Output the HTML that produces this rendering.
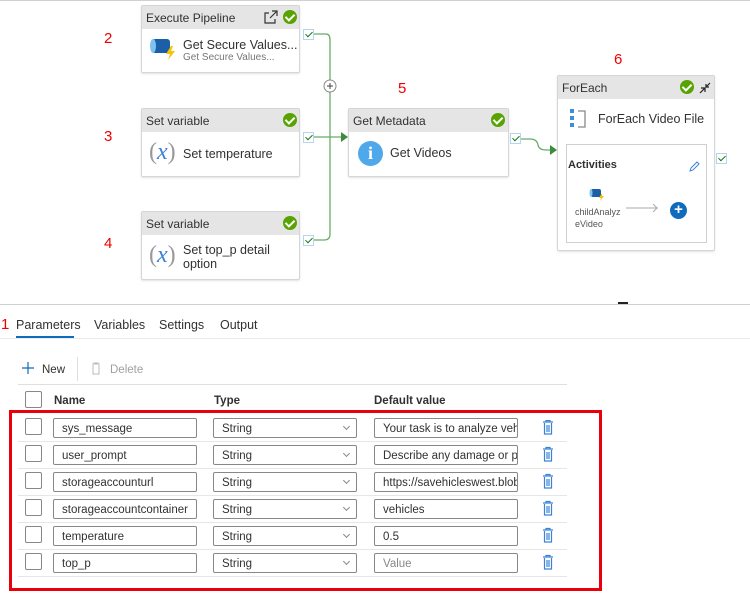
<!DOCTYPE html>
<html><head><meta charset="utf-8"><style>
*{box-sizing:border-box;margin:0;padding:0}
body{width:750px;height:614px;background:#fff;position:relative;overflow:hidden;font-family:"Liberation Sans",sans-serif;font-size:12px;color:#323130}
.a{position:absolute}
.card{position:absolute;background:#fff;border:1px solid #d6d6d6;border-radius:2px;box-shadow:0 1px 2px rgba(0,0,0,.12)}
.hd{height:23px;background:#e5e5e5;padding:5px 4px;font-size:12px;color:#323130}
.ok{position:absolute;width:14px;height:14px;border-radius:50%;background:#57a300}
.ok:after{content:"";position:absolute;left:4px;top:2px;width:4px;height:7px;border:solid #fff;border-width:0 2px 2px 0;transform:rotate(45deg)}
.cb{position:absolute;width:11px;height:11px;border:1px solid #b8d3ee;background:#fff}
.cb:after{content:"";position:absolute;left:3px;top:0px;width:3px;height:6px;border:solid #107c10;border-width:0 1.5px 1.5px 0;transform:rotate(45deg)}
.num{position:absolute;color:#e00;font-size:15px}
.x{position:absolute;font-family:"Liberation Serif",serif;font-size:24px;color:#999}
.x i{color:#3b82d6}
.t{position:absolute;font-size:12.5px}
.inp{position:absolute;height:20px;border:1px solid #8a8886;border-radius:2px;padding:4px 8px 0;font-size:11.5px;white-space:nowrap;overflow:hidden}
.chk{position:absolute;width:17px;height:17px;border:1px solid #8a8886;border-radius:2px;left:25px}
.rl{position:absolute;left:18px;width:549px;height:1px;background:#e8e6e4}
.car{position:absolute;right:7px;top:5px;width:5px;height:5px;border:solid #888;border-width:0 1px 1px 0;transform:rotate(45deg)}
</style></head><body>
<div class="a" style="left:0;top:0;width:750px;height:1px;background:#d0d0d0"></div>

<svg class="a" style="left:0;top:0" width="750" height="300">
<path d="M312 34 H326 Q330 34 330 40 V234 Q330 240 324 240 H312" fill="none" stroke="#6aaa6a" stroke-width="1.3"/>
<path d="M312 137 H343" stroke="#6aaa6a" stroke-width="1.3"/>
<polygon points="341,132 348,137 341,142" fill="#3c8c3c"/>
<circle cx="330" cy="86" r="6" fill="#fff" stroke="#888"/>
<path d="M327 86h6M330 83v6" stroke="#444"/>
<path d="M519 139 H530 Q537 139 538 145 Q539 150 546 150 H551" fill="none" stroke="#6aaa6a" stroke-width="1.3"/>
<polygon points="550,145 557,150 550,155" fill="#3c8c3c"/>
</svg>

<div class="num" style="left:104px;top:30px">2</div>
<div class="num" style="left:104px;top:128px">3</div>
<div class="num" style="left:104px;top:235px">4</div>
<div class="num" style="left:398px;top:80px">5</div>
<div class="num" style="left:614px;top:51px">6</div>
<div class="num" style="left:1px;top:316px">1</div>

<div class="card" style="left:141px;top:5px;width:159px;height:68px">
<div class="hd">Execute Pipeline</div>
<svg class="a" style="left:122px;top:4px" width="14" height="14"><path d="M8 1h5v5M13 1L6 8M11 9v4H1V3h4" fill="none" stroke="#333" stroke-width="1.2"/></svg>
<div class="ok" style="left:141px;top:4px"></div>
<svg class="a" style="left:7px;top:30px" width="28" height="26"><rect x="3" y="3" width="18" height="14" rx="3" fill="#1b5fa8"/><ellipse cx="4" cy="10" rx="3" ry="7" fill="#7ec3f0"/><path d="M22 10l-5 8h4l-2 6 7-9h-4l2-5z" fill="#f5c400"/></svg>
<div class="t" style="left:41px;top:32px">Get Secure Values...</div>
<div class="t" style="left:41px;top:46px;font-size:10px;color:#777">Get Secure Values...</div>
</div>
<div class="cb" style="left:303px;top:29px"></div>

<div class="card" style="left:141px;top:108px;width:159px;height:69px">
<div class="hd">Set variable</div>
<div class="ok" style="left:141px;top:4px"></div>
<div class="x" style="left:7px;top:30px">(<i>x</i>)</div>
<div class="t" style="left:41px;top:38px">Set temperature</div>
</div>
<div class="cb" style="left:303px;top:132px"></div>

<div class="card" style="left:141px;top:211px;width:159px;height:69px">
<div class="hd">Set variable</div>
<div class="ok" style="left:141px;top:4px"></div>
<div class="x" style="left:7px;top:30px">(<i>x</i>)</div>
<div class="t" style="left:41px;top:31px;line-height:14px">Set top_p detail<br>option</div>
</div>
<div class="cb" style="left:303px;top:235px"></div>

<div class="card" style="left:348px;top:108px;width:161px;height:69px">
<div class="hd">Get Metadata</div>
<div class="ok" style="left:142px;top:4px"></div>
<div class="a" style="left:9px;top:32px;width:25px;height:25px;border-radius:50%;background:#4fa8ea;color:#fff;font-weight:bold;text-align:center;font-size:18px;line-height:25px;font-family:'Liberation Serif',serif">i</div>
<div class="t" style="left:41px;top:37px">Get Videos</div>
</div>
<div class="cb" style="left:510px;top:133px"></div>

<div class="card" style="left:557px;top:75px;width:158px;height:176px">
<div class="hd">ForEach</div>
<div class="ok" style="left:122px;top:4px"></div>
<svg class="a" style="left:140px;top:5px" width="14" height="14"><path d="M2 12l5-5M3 7h4v4M12 2L8 6M8 3v3h3" fill="none" stroke="#222" stroke-width="1.2"/></svg>
<svg class="a" style="left:11px;top:32px" width="18" height="22"><rect x="1" y="1" width="4" height="4" fill="#3b8fe0"/><rect x="1" y="8" width="4" height="4" fill="#3b8fe0"/><rect x="1" y="15" width="4" height="4" fill="#3b8fe0"/><path d="M9 3h7v16h-7" fill="none" stroke="#888" stroke-width="1.3"/></svg>
<div class="t" style="left:40px;top:36px">ForEach Video File</div>
<div class="a" style="left:8px;top:68px;width:141px;height:99px;border:1px solid #d0d0d0">
<div class="t" style="left:1px;top:14px;font-size:11px;font-weight:bold">Activities</div>
<svg class="a" style="left:121px;top:16px" width="12" height="12"><path d="M2 10l1-3 6-6 2 2-6 6z" fill="none" stroke="#3b82d6"/></svg>
<svg class="a" style="left:22px;top:42px" width="16" height="14"><rect x="2" y="2" width="10" height="8" rx="2" fill="#1b5fa8"/><ellipse cx="2" cy="6" rx="1.5" ry="4" fill="#7ec3f0"/><path d="M13 6l-3 5h2l-1 3 4-5h-2z" fill="#f5c400"/></svg>
<div class="t" style="left:8px;top:61px;font-size:9px;color:#555;line-height:12px">childAnalyz<br>eVideo</div>
<svg class="a" style="left:58px;top:57px" width="36" height="12"><path d="M1 6h32M28 2l4 4-4 4" fill="none" stroke="#aaa"/></svg>
<div class="a" style="left:103px;top:57px;width:17px;height:17px;border-radius:50%;background:#0f6cbd;color:#fff;text-align:center;line-height:16px;font-weight:bold;font-size:15px">+</div>
</div>
</div>
<div class="cb" style="left:716px;top:153px"></div>

<div class="a" style="left:0;top:304px;width:750px;height:1px;background:#d0d0d0"></div>
<div class="a" style="left:618px;top:302px;width:10px;height:2px;background:#222"></div>

<div class="t" style="left:16px;top:318px;font-size:12.5px">Parameters</div>
<div class="t" style="left:94px;top:318px;font-size:12.5px">Variables</div>
<div class="t" style="left:159px;top:318px;font-size:12.5px">Settings</div>
<div class="t" style="left:220px;top:318px;font-size:12.5px">Output</div>
<div class="a" style="left:16px;top:336px;width:58px;height:2px;background:#0f6cbd"></div>
<div class="a" style="left:0;top:338px;width:750px;height:1px;background:#edebe9"></div>

<svg class="a" style="left:22px;top:362px" width="12" height="12"><path d="M6 0v12M0 6h12" stroke="#0f6cbd" stroke-width="1.2"/></svg>
<div class="t" style="left:42px;top:364px;font-size:11.5px">New</div>
<div class="a" style="left:77px;top:357px;width:1px;height:24px;background:#e1dfdd"></div>
<svg class="a" style="left:91px;top:362px" width="10" height="13"><path d="M1 2h8M3 2V1h4v1M2 3v9h6V3" fill="none" stroke="#bbb"/></svg>
<div class="t" style="left:110px;top:364px;font-size:11.5px;color:#a19f9d">Delete</div>
<div class="a" style="left:18px;top:384px;width:549px;height:1px;background:#e1dfdd"></div>

<div class="chk" style="top:391px"></div>
<div class="t" style="left:54px;top:395px;font-weight:bold;font-size:11.5px">Name</div>
<div class="t" style="left:214px;top:395px;font-weight:bold;font-size:11.5px">Type</div>
<div class="t" style="left:374px;top:395px;font-weight:bold;font-size:11.5px">Default value</div>

<div class="chk" style="top:418px"></div><div class="inp" style="left:53px;top:418px;width:144px">sys_message</div><div class="inp" style="left:213px;top:418px;width:144px">String<span class="car"></span></div><div class="inp" style="left:374px;top:418px;width:144px">Your task is to analyze vehic</div><div class="rl" style="top:441px"></div>
<div class="chk" style="top:445px"></div><div class="inp" style="left:53px;top:445px;width:144px">user_prompt</div><div class="inp" style="left:213px;top:445px;width:144px">String<span class="car"></span></div><div class="inp" style="left:374px;top:445px;width:144px">Describe any damage or pc</div><div class="rl" style="top:468px"></div>
<div class="chk" style="top:472px"></div><div class="inp" style="left:53px;top:472px;width:144px">storageaccounturl</div><div class="inp" style="left:213px;top:472px;width:144px">String<span class="car"></span></div><div class="inp" style="left:374px;top:472px;width:144px">https://savehicleswest.blob.</div><div class="rl" style="top:495px"></div>
<div class="chk" style="top:499px"></div><div class="inp" style="left:53px;top:499px;width:144px">storageaccountcontainer</div><div class="inp" style="left:213px;top:499px;width:144px">String<span class="car"></span></div><div class="inp" style="left:374px;top:499px;width:144px">vehicles</div><div class="rl" style="top:522px"></div>
<div class="chk" style="top:526px"></div><div class="inp" style="left:53px;top:526px;width:144px">temperature</div><div class="inp" style="left:213px;top:526px;width:144px">String<span class="car"></span></div><div class="inp" style="left:374px;top:526px;width:144px">0.5</div><div class="rl" style="top:549px"></div>
<div class="chk" style="top:553px"></div><div class="inp" style="left:53px;top:553px;width:144px">top_p</div><div class="inp" style="left:213px;top:553px;width:144px">String<span class="car"></span></div><div class="inp" style="left:374px;top:553px;width:144px;color:#8a8886">Value</div><div class="rl" style="top:576px"></div>

<svg class="a" style="left:542px;top:420px" width="12" height="160">
<g fill="none" stroke="#3b82d6" stroke-width="1.2">
<path d="M1 2h10M4 2V0.5h4V2M2.5 3v11h7V3M5 5v7M7 5v7"/>
<path transform="translate(0,27)" d="M1 2h10M4 2V0.5h4V2M2.5 3v11h7V3M5 5v7M7 5v7"/>
<path transform="translate(0,54)" d="M1 2h10M4 2V0.5h4V2M2.5 3v11h7V3M5 5v7M7 5v7"/>
<path transform="translate(0,81)" d="M1 2h10M4 2V0.5h4V2M2.5 3v11h7V3M5 5v7M7 5v7"/>
<path transform="translate(0,108)" d="M1 2h10M4 2V0.5h4V2M2.5 3v11h7V3M5 5v7M7 5v7"/>
<path transform="translate(0,135)" d="M1 2h10M4 2V0.5h4V2M2.5 3v11h7V3M5 5v7M7 5v7"/>
</g></svg>

<div class="a" style="left:9px;top:410px;width:593px;height:181px;border:3px solid #e8000b"></div>
</body></html>
